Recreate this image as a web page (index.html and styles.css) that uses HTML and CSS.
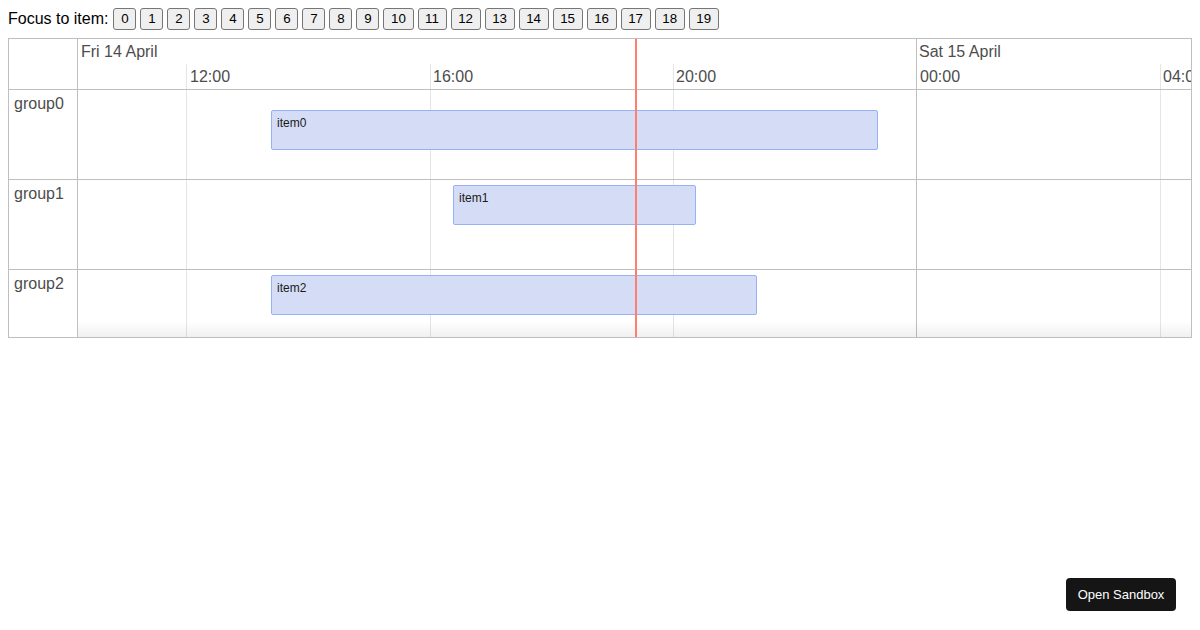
FILE: index.html
```html
<!DOCTYPE html>
<html lang="en">
<head>
    <meta charset="UTF-8">
    <meta name="viewport" content="width=device-width, initial-scale=1.0">
    <title>Timeline focus</title>
    <link rel="stylesheet" href="styles.css">
</head>
<body>
    <div class="toolbar">
        <span class="toolbar-label">Focus to item:</span>
        <button>0</button>
        <button>1</button>
        <button>2</button>
        <button>3</button>
        <button>4</button>
        <button>5</button>
        <button>6</button>
        <button>7</button>
        <button>8</button>
        <button>9</button>
        <button>10</button>
        <button>11</button>
        <button>12</button>
        <button>13</button>
        <button>14</button>
        <button>15</button>
        <button>16</button>
        <button>17</button>
        <button>18</button>
        <button>19</button>
    </div>

    <div class="timeline">
        <div class="left-panel">
            <div class="left-header"></div>
            <div class="label">group0</div>
            <div class="label">group1</div>
            <div class="label last">group2</div>
        </div>

        <div class="center-panel">
            <!-- grid lines -->
            <div class="grid minor" style="left: 108px"></div>
            <div class="grid minor" style="left: 352px"></div>
            <div class="grid minor" style="left: 595px"></div>
            <div class="grid major" style="left: 838px"></div>
            <div class="grid minor" style="left: 1082px"></div>

            <div class="axis">
                <div class="axis-text major-text" style="left: 0px">Fri 14 April</div>
                <div class="axis-text major-text" style="left: 838px">Sat 15 April</div>
                <div class="axis-text minor-text" style="left: 108px">12:00</div>
                <div class="axis-text minor-text" style="left: 351px">16:00</div>
                <div class="axis-text minor-text" style="left: 594px">20:00</div>
                <div class="axis-text minor-text" style="left: 838px">00:00</div>
                <div class="axis-text minor-text" style="left: 1081px">04:00</div>
            </div>

            <div class="group">
                <div class="item" style="left: 193px; width: 607px; top: 20px">item0</div>
            </div>
            <div class="group">
                <div class="item" style="left: 375px; width: 243px; top: 5px">item1</div>
            </div>
            <div class="group last">
                <div class="item" style="left: 193px; width: 486px; top: 5px">item2</div>
                <div class="shadow"></div>
            </div>

            <div class="current-time" style="left: 557px"></div>
        </div>
    </div>

    <a class="sandbox-btn" href="#">Open Sandbox</a>
</body>
</html>
```

FILE: styles.css
```css
body {
    font-family: "Liberation Sans", Arial, sans-serif;
    margin: 8px;
    color: #000;
    background: #fff;
}

.toolbar {
    display: flex;
    align-items: center;
    gap: 4px;
    height: 22px;
}

.toolbar-label {
    font-size: 16px;
    margin-right: 1px;
}

.toolbar button {
    font-family: "Liberation Sans", Arial, sans-serif;
    font-size: 13.33px;
    line-height: 16px;
    height: 22px;
    min-width: 23px;
    padding: 2px 6.6px;
    background-color: #efefef;
    border: 1px solid #767676;
    border-radius: 3px;
    color: #000;
}

.timeline {
    margin-top: 8px;
    height: 300px;
    box-sizing: border-box;
    border: 1px solid #bfbfbf;
    display: grid;
    grid-template-columns: 69px 1fr;
    overflow: hidden;
    color: #4d4d4d;
}

.left-panel {
    border-right: 1px solid #bfbfbf;
    display: flex;
    flex-direction: column;
}

.left-header {
    height: 50px;
    border-bottom: 1px solid #bfbfbf;
}

.label {
    height: 90px;
    box-sizing: border-box;
    border-bottom: 1px solid #bfbfbf;
    padding: 5px;
    font-size: 16px;
    line-height: 18px;
}

.label.last,
.group.last {
    flex: 1;
    border-bottom: none;
}

.center-panel {
    position: relative;
    display: flex;
    flex-direction: column;
    overflow: hidden;
}

.axis {
    position: relative;
    height: 50px;
    flex-shrink: 0;
    border-bottom: 1px solid #bfbfbf;
}

.axis-text {
    position: absolute;
    padding: 3px 3px 3px 4px;
    font-size: 16px;
    line-height: 18px;
    white-space: nowrap;
}

.major-text {
    top: 1px;
    padding-left: 3px;
}

.minor-text {
    top: 26px;
}

.grid {
    position: absolute;
    bottom: 0;
    width: 1px;
}

.grid.minor {
    top: 25px;
    background-color: #e5e5e5;
}

.grid.major {
    top: 0;
    background-color: #bfbfbf;
}

.group {
    position: relative;
    height: 90px;
    box-sizing: border-box;
    flex-shrink: 0;
    border-bottom: 1px solid #bfbfbf;
}

.item {
    position: absolute;
    height: 40px;
    box-sizing: border-box;
    padding: 5px;
    background-color: #d5ddf6;
    border: 1px solid #97b0f8;
    border-radius: 2px;
    color: #1a1a1a;
    font-size: 12px;
    line-height: 14px;
}

.shadow {
    position: absolute;
    left: 0;
    right: 0;
    bottom: 0;
    height: 16px;
    background: linear-gradient(to bottom, rgba(0, 0, 0, 0), rgba(0, 0, 0, 0.06));
}

.current-time {
    position: absolute;
    top: 0;
    bottom: 0;
    width: 2px;
    background-color: #ff7f6e;
    z-index: 2;
}

.sandbox-btn {
    position: fixed;
    right: 24px;
    bottom: 19px;
    width: 110px;
    height: 33px;
    line-height: 33px;
    text-align: center;
    background-color: #151515;
    color: #fff;
    border-radius: 4px;
    font-size: 13px;
    text-decoration: none;
}
```
